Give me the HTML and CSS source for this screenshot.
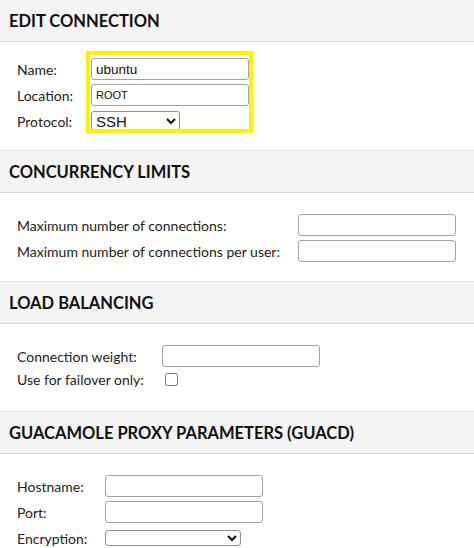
FILE: index.html
```html
<!DOCTYPE html>
<html lang="en">
<head>
<meta charset="utf-8">
<title>Edit Connection</title>
<link rel="stylesheet" href="styles.css">
</head>
<body>
<section class="section">
  <h2 class="header">EDIT CONNECTION</h2>
  <div class="body body-first">
    <table class="props">
      <tr><th>Name:</th><td><input class="text" type="text" value="ubuntu"></td></tr>
      <tr><th>Location:</th><td><div class="location">ROOT</div></td></tr>
      <tr><th>Protocol:</th><td><select class="sel sel-protocol"><option>SSH</option></select></td></tr>
    </table>
    <div class="highlight"></div>
  </div>
</section>
<section class="section">
  <h2 class="header">CONCURRENCY LIMITS</h2>
  <div class="body">
    <table class="props">
      <tr><th>Maximum number of connections:</th><td><input class="text" type="text"></td></tr>
      <tr><th>Maximum number of connections per user:</th><td><input class="text" type="text"></td></tr>
    </table>
  </div>
</section>
<section class="section">
  <h2 class="header">LOAD BALANCING</h2>
  <div class="body body-lb">
    <table class="props">
      <tr><th>Connection weight:</th><td><input class="text" type="text"></td></tr>
      <tr class="row-check"><th>Use for failover only:</th><td><input class="check" type="checkbox"></td></tr>
    </table>
  </div>
</section>
<section class="section">
  <h2 class="header">GUACAMOLE PROXY PARAMETERS (GUACD)</h2>
  <div class="body">
    <table class="props">
      <tr><th>Hostname:</th><td><input class="text" type="text"></td></tr>
      <tr><th>Port:</th><td><input class="text" type="text"></td></tr>
      <tr><th>Encryption:</th><td><select class="sel sel-enc"><option></option></select></td></tr>
    </table>
  </div>
</section>
</body>
</html>
```
FILE: styles.css
```css
html, body {
  margin: 0;
  padding: 0;
  background: #fff;
}
body {
  font-family: Lato, "Open Sans", sans-serif;
  color: #222;
  font-size: 14px;
}
.header {
  margin: 0;
  box-sizing: border-box;
  padding: 0 9px;
  display: flex;
  align-items: center;
  background: #f4f4f4;
  border-top: 1px solid #e6e6e6;
  border-bottom: 1px solid #d8d8d8;
  font-size: 16.5px;
  font-weight: 700;
  color: #111;
  height: 43px;
}
.section:first-child .header {
  border-top: none;
  height: 42px;
}
.body {
  position: relative;
  padding: 19px 17px 17px;
}
.body-first {
  padding-top: 14px;
  padding-bottom: 16px;
}
.body-lb {
  padding-bottom: 22px;
}
.props {
  border-collapse: collapse;
}
.props th {
  text-align: left;
  font-weight: 400;
  padding: 0 18px 0 0;
  white-space: nowrap;
  color: #222;
  height: 26px;
}
.props td {
  padding: 2px 0;
}
.props .row-check th {
  height: 20px;
}
.props .row-check td {
  padding: 0;
}
.text, .location {
  display: block;
  box-sizing: border-box;
  width: 158px;
  height: 22px;
  border: 1px solid #a3a3a3;
  border-radius: 3px;
  padding: 0 4px;
  font-family: Arial, "Liberation Sans", sans-serif;
  font-size: 13.5px;
  color: #111;
  background: #fff;
  margin: 0;
}
.location {
  font-size: 11px;
  line-height: 20px;
}
.sel {
  display: block;
  box-sizing: border-box;
  height: 20px;
  margin: 0;
  font-family: Arial, "Liberation Sans", sans-serif;
  font-size: 15px;
  color: #111;
  border: 1px solid #8f8f8f;
  border-radius: 3px;
  background: #fff;
}
.sel-protocol {
  width: 89px;
}
.sel-enc {
  width: 136px;
  height: 16px;
}
.check {
  margin: 3px;
  width: 13px;
  height: 13px;
  display: block;
}
.highlight {
  position: absolute;
  left: 86px;
  top: 9px;
  width: 167px;
  height: 82px;
  box-sizing: border-box;
  border: 4px solid #fff200;
  pointer-events: none;
}
```
